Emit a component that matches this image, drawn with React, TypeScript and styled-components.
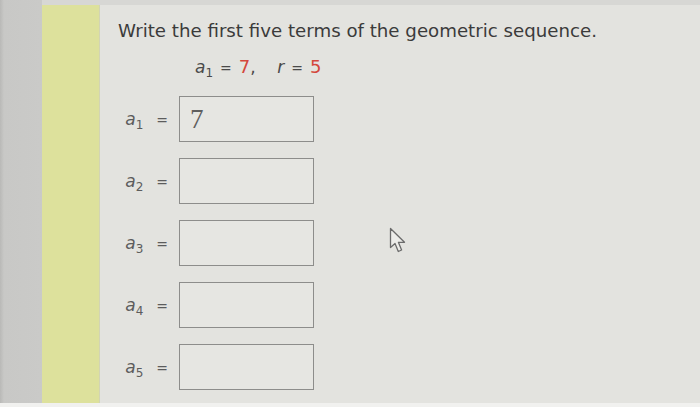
import React from "react";
import styled, { createGlobalStyle } from "styled-components";

const Global = createGlobalStyle`
  html, body { margin: 0; padding: 0; background: #e3e3df; }
  #root { width: 700px; height: 407px; overflow: hidden; }
`;

const Page = styled.div`
  width: 700px;
  height: 407px;
  display: flex;
  flex-direction: column;
  font-family: "DejaVu Sans", Verdana, sans-serif;
`;

const Main = styled.div`
  flex: 1;
  display: flex;
  min-height: 0;
`;

const Gutter = styled.div`
  width: 42px;
  background: linear-gradient(90deg, #b9b9b7 0px, #c8c8c6 4px, #cacac8 100%);
`;

const Frame = styled.div`
  flex: 1;
  display: flex;
  flex-direction: column;
`;

const TopBand = styled.div`
  height: 5px;
  background: #d7d7d4;
`;

const Body = styled.div`
  flex: 1;
  display: flex;
`;

const Sidebar = styled.div`
  width: 57px;
  background: #dde19c;
  border-right: 1px solid #d2d4b4;
`;

const Content = styled.div`
  position: relative;
  flex: 1;
  background: #e3e3df;
  padding: 15px 0 0 18px;
  display: flex;
  flex-direction: column;
`;

const Title = styled.div`
  font-size: 18.2px;
  line-height: 22px;
  color: #3b3b3b;
  white-space: nowrap;
`;

const Formula = styled.div`
  margin: 13px 0 0 77px;
  font-size: 17px;
  line-height: 24px;
  color: #4a4a4a;
  white-space: nowrap;
`;

const Var = styled.span`
  font-style: italic;
`;

const Sub = styled.sub`
  font-size: 12px;
  vertical-align: -4px;
  line-height: 0;
`;

const Eq = styled.span`
  font-size: 14px;
  margin: 0 7px;
`;

const Red = styled.span`
  color: #d4473c;
  font-size: 18px;
`;

const Rows = styled.div`
  margin-top: 16px;
  display: grid;
  grid-template-columns: 61px 135px;
  grid-auto-rows: 46px;
  row-gap: 16px;
`;

const Label = styled.div`
  display: flex;
  align-items: center;
  justify-content: flex-end;
  padding-right: 11px;
`;

const LabelText = styled.span`
  font-size: 17px;
  line-height: 20px;
  color: #5c5c5c;
  white-space: nowrap;
`;

const LabelEq = styled.span`
  font-size: 14px;
  margin-left: 13px;
`;

const Box = styled.div`
  box-sizing: border-box;
  border: 1.5px solid #8d8d8b;
  background: #e6e6e2;
  display: flex;
  align-items: center;
  padding-left: 10px;
  font-family: "Liberation Serif", "Times New Roman", serif;
  font-size: 27px;
  color: #5e5e5e;
`;

const Cursor = styled.svg`
  position: absolute;
  left: 289px;
  top: 222px;
  width: 20px;
  height: 28px;
`;

const BottomLine = styled.div`
  height: 4px;
  background: #f1f1ef;
`;

const terms = ["7", "", "", "", ""];

export default function App() {
  return (
    <>
      <Global />
      <Page>
        <Main>
          <Gutter />
          <Frame>
            <TopBand />
            <Body>
              <Sidebar />
              <Content>
                <Title>Write the first five terms of the geometric sequence.</Title>
                <Formula>
                  <Var>a</Var>
                  <Sub>1</Sub>
                  <Eq>=</Eq>
                  <Red>7</Red>,&nbsp;&nbsp;&nbsp;&nbsp;
                  <Var>r</Var>
                  <Eq>=</Eq>
                  <Red>5</Red>
                </Formula>
                <Rows>
                  {terms.map((t, i) => (
                    <React.Fragment key={i}>
                      <Label>
                        <LabelText>
                          <Var>a</Var>
                          <Sub>{i + 1}</Sub>
                          <LabelEq>=</LabelEq>
                        </LabelText>
                      </Label>
                      <Box>{t}</Box>
                    </React.Fragment>
                  ))}
                </Rows>
                <Cursor viewBox="0 0 20 28">
                  <path
                    d="M1.5 1.5 L1.5 20.5 L6 16.5 L9.3 24.5 L12.6 23 L9.4 15.3 L15.5 15.3 Z"
                    fill="#ecece9"
                    stroke="#6b6b6b"
                    strokeWidth="1.3"
                    strokeLinejoin="round"
                  />
                </Cursor>
              </Content>
            </Body>
          </Frame>
        </Main>
        <BottomLine />
      </Page>
    </>
  );
}
